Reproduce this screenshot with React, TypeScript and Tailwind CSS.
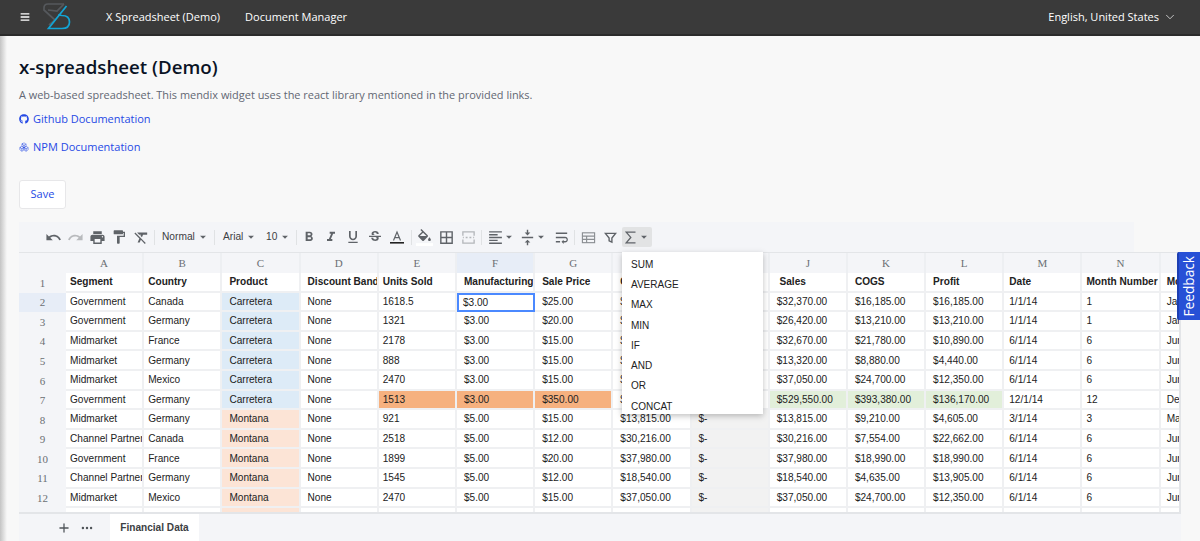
import { useState, type ReactNode } from 'react'
import { ChevronDown, Boxes, Plus, MoreHorizontal } from 'lucide-react'
import { FaBars, FaGithub } from 'react-icons/fa'
import {
  MdUndo,
  MdRedo,
  MdPrint,
  MdFormatPaint,
  MdFormatClear,
  MdFormatBold,
  MdFormatItalic,
  MdFormatUnderlined,
  MdStrikethroughS,
  MdBorderAll,
  MdFormatAlignLeft,
  MdVerticalAlignCenter,
  MdWrapText,
  MdArrowDropDown,
} from 'react-icons/md'

const openSans = "font-['Open_Sans',sans-serif]"

const columns = ['A', 'B', 'C', 'D', 'E', 'F', 'G', 'H', 'I', 'J', 'K', 'L', 'M', 'N', 'O']

// left padding per column, the sheet does not line its text up evenly
const pads = [
  'pl-[4px]',
  'pl-[4px]',
  'pl-[7px]',
  'pl-[7px]',
  'pl-[4px]',
  'pl-[7px]',
  'pl-[7px]',
  'pl-[7px]',
  'pl-[7px]',
  'pl-[7px]',
  'pl-[7px]',
  'pl-[7px]',
  'pl-[5px]',
  'pl-[4px]',
  'pl-[6px]',
]

const heading = [
  'Segment',
  'Country',
  'Product',
  'Discount Band',
  'Units Sold',
  'Manufacturing',
  'Sale Price',
  'Gross Sales',
  'Discounts',
  ' Sales',
  'COGS',
  'Profit',
  'Date',
  'Month Number',
  'Month Name',
]

const rows = [
  ['Government', 'Canada', 'Carretera', 'None', '1618.5', '$3.00', '$25.00', '$32,370.00', '$-', '$32,370.00', '$16,185.00', '$16,185.00', '1/1/14', '1', 'January'],
  ['Government', 'Germany', 'Carretera', 'None', '1321', '$3.00', '$20.00', '$26,420.00', '$-', '$26,420.00', '$13,210.00', '$13,210.00', '1/1/14', '1', 'January'],
  ['Midmarket', 'France', 'Carretera', 'None', '2178', '$3.00', '$15.00', '$32,670.00', '$-', '$32,670.00', '$21,780.00', '$10,890.00', '6/1/14', '6', 'June'],
  ['Midmarket', 'Germany', 'Carretera', 'None', '888', '$3.00', '$15.00', '$13,320.00', '$-', '$13,320.00', '$8,880.00', '$4,440.00', '6/1/14', '6', 'June'],
  ['Midmarket', 'Mexico', 'Carretera', 'None', '2470', '$3.00', '$15.00', '$37,050.00', '$-', '$37,050.00', '$24,700.00', '$12,350.00', '6/1/14', '6', 'June'],
  ['Government', 'Germany', 'Carretera', 'None', '1513', '$3.00', '$350.00', '$529,550.00', '$-', '$529,550.00', '$393,380.00', '$136,170.00', '12/1/14', '12', 'December'],
  ['Midmarket', 'Germany', 'Montana', 'None', '921', '$5.00', '$15.00', '$13,815.00', '$-', '$13,815.00', '$9,210.00', '$4,605.00', '3/1/14', '3', 'March'],
  ['Channel Partner', 'Canada', 'Montana', 'None', '2518', '$5.00', '$12.00', '$30,216.00', '$-', '$30,216.00', '$7,554.00', '$22,662.00', '6/1/14', '6', 'June'],
  ['Government', 'France', 'Montana', 'None', '1899', '$5.00', '$20.00', '$37,980.00', '$-', '$37,980.00', '$18,990.00', '$18,990.00', '6/1/14', '6', 'June'],
  ['Channel Partner', 'Germany', 'Montana', 'None', '1545', '$5.00', '$12.00', '$18,540.00', '$-', '$18,540.00', '$4,635.00', '$13,905.00', '6/1/14', '6', 'June'],
  ['Midmarket', 'Mexico', 'Montana', 'None', '2470', '$5.00', '$15.00', '$37,050.00', '$-', '$37,050.00', '$24,700.00', '$12,350.00', '6/1/14', '6', 'June'],
  ['Enterprise', 'Canada', 'Montana', 'None', '2665.5', '$5.00', '$125.00', '$333,187.50', '$-', '$333,187.50', '$319,860.00', '$13,327.50', '7/1/14', '7', 'July'],
]

const formulas = ['SUM', 'AVERAGE', 'MAX', 'MIN', 'IF', 'AND', 'OR', 'CONCAT', 'COUNT']

function Logo() {
  return (
    <svg width="28" height="28" viewBox="43 4 28 28" fill="none" strokeWidth="1.7">
      <path d="M64 5H48q-4 0-4 4v2l11 10-6 5" stroke="#55585c" />
      <path d="M64 5l-7 7-9-1" stroke="#55585c" />
      <path d="M66.5 7 48.5 29.5H62q7.5 0 7.5-6.5T62 16.5L58 16" stroke="#12a5d6" />
    </svg>
  )
}

function Separator({ space }: { space: string }) {
  return <div className={`w-px h-[15px] bg-[#e0e2e4] ${space}`} />
}

function Tool({ children, width = 'w-[22px]' }: { children: ReactNode; width?: string }) {
  return <div className={`${width} h-[20px] shrink-0 flex items-center justify-center text-[#5f6368]`}>{children}</div>
}

function Caret() {
  return <MdArrowDropDown size={14} className="text-[#5f6368] -ml-[2px]" />
}

function MergeIcon() {
  return (
    <svg width="15" height="15" viewBox="0 0 16 16" fill="none" stroke="#b3b6b9" strokeWidth="1.4">
      <path d="M2 6V2h12v4M2 10v4h12v-4M5 8h2M9 8h2M2 8h1M13 8h1" />
    </svg>
  )
}

function FreezeIcon() {
  return (
    <svg width="15" height="15" viewBox="0 0 16 16" fill="none" stroke="#8a8e92" strokeWidth="1.2">
      <rect x="1.5" y="3" width="13" height="10.5" />
      <path d="M1.5 6.5h13M1.5 10h13M6 6.5v7" />
    </svg>
  )
}

function FilterIcon() {
  return (
    <svg width="13" height="13" viewBox="0 0 14 14" fill="none" stroke="#5f6368" strokeWidth="1.5">
      <path d="M1.5 2.5h11L8.5 7.5V12L5.5 10.5v-3z" />
    </svg>
  )
}

function TextColorIcon() {
  return (
    <svg width="16" height="16" viewBox="0 0 16 16" fill="none">
      <path d="M4.5 11.5 8 3l3.5 8.5M5.6 8.6h4.8" stroke="#5f6368" strokeWidth="1.2" />
      <rect x="1" y="13" width="14" height="1.6" fill="#222" />
    </svg>
  )
}

function FillIcon() {
  return (
    <svg width="17" height="17" viewBox="0 0 24 24" fill="#5f6368">
      <path d="M16.56 8.94 7.62 0 6.21 1.41l2.38 2.38-5.15 5.15c-.59.59-.59 1.54 0 2.12l5.5 5.5c.29.29.68.44 1.06.44s.77-.15 1.06-.44l5.5-5.5c.59-.58.59-1.53 0-2.12zM5.21 10 10 5.21 14.79 10H5.21zM19 11.5s-2 2.17-2 3.5c0 1.1.9 2 2 2s2-.9 2-2c0-1.33-2-3.5-2-3.5z" />
      <rect y="20" width="24" height="4" fill="#fff" />
    </svg>
  )
}

function SigmaIcon() {
  return (
    <svg width="11" height="13" viewBox="0 0 11 13" fill="none" stroke="#5f6368" strokeWidth="1.3">
      <path d="M10.5 1.2H1.2l4.6 5.2-4.6 5.4h9.3" />
    </svg>
  )
}

function Toolbar() {
  return (
    <div className="flex items-center h-[30px] w-[1115px] pl-[23px] bg-[#f4f5f8] font-['Liberation_Sans',sans-serif] text-[10.2px] text-[#3c4043]">
      <Tool><MdUndo size={17} /></Tool>
      <Tool><MdRedo size={17} className="text-[#b8babd]" /></Tool>
      <Tool><MdPrint size={17} /></Tool>
      <Tool><MdFormatPaint size={16} /></Tool>
      <Tool><MdFormatClear size={17} /></Tool>
      <Separator space="ml-[2px] mr-[7px]" />
      <div className="flex items-center w-[50px] shrink-0">
        <span>Normal</span>
        <MdArrowDropDown size={14} className="ml-[1px] text-[#5f6368]" />
      </div>
      <Separator space="ml-[2px] mr-[8px]" />
      <div className="flex items-center w-[43px] shrink-0">
        <span>Arial</span>
        <MdArrowDropDown size={14} className="ml-[1px] text-[#5f6368]" />
      </div>
      <div className="flex items-center w-[28px] shrink-0">
        <span>10</span>
        <MdArrowDropDown size={14} className="ml-px text-[#5f6368]" />
      </div>
      <Separator space="ml-[2px] mr-[1px]" />
      <Tool><MdFormatBold size={16} /></Tool>
      <Tool><MdFormatItalic size={16} /></Tool>
      <Tool><MdFormatUnderlined size={16} /></Tool>
      <Tool><MdStrikethroughS size={16} /></Tool>
      <Tool><TextColorIcon /></Tool>
      <Separator space="ml-[3px] mr-[1px]" />
      <Tool><FillIcon /></Tool>
      <Tool><MdBorderAll size={17} /></Tool>
      <Tool><MergeIcon /></Tool>
      <Separator space="ml-[2px] mr-[3px]" />
      <Tool width="w-[32.5px]">
        <MdFormatAlignLeft size={17} />
        <Caret />
      </Tool>
      <Tool width="w-[32.5px]">
        <MdVerticalAlignCenter size={17} />
        <Caret />
      </Tool>
      <Tool><MdWrapText size={17} /></Tool>
      <Separator space="ml-[2px] mr-[2px]" />
      <Tool><FreezeIcon /></Tool>
      <Tool><FilterIcon /></Tool>
      <div className="relative ml-[1px] w-[30px] h-[20px] shrink-0 flex items-center justify-center gap-[1px] pl-[2px] bg-[#e2e3e4] rounded-[2px]">
        <SigmaIcon />
        <MdArrowDropDown size={14} className="text-[#5f6368]" />
        <div className="absolute z-20 left-0 top-[25px] w-[141px] h-[162px] overflow-hidden bg-white shadow-[0_2px_6px_rgba(0,0,0,0.25)] pt-[2px]">
          {formulas.map((f) => (
            <div key={f} className="h-[20.3px] pl-[9px] flex items-center text-[10px] text-[#222]">
              {f}
            </div>
          ))}
        </div>
      </div>
    </div>
  )
}

function cellTone(row: number, col: number) {
  if (row === 5 && col >= 4 && col <= 6) return 'bg-[#f6b17f]'
  if (row === 5 && col >= 9 && col <= 11) return 'bg-[#e2efda]'
  if (col === 2) return row < 6 ? 'bg-[#ddebf7]' : 'bg-[#fce4d6]'
  if (col === 8 && row >= 6) return 'bg-[#f2f2f2]'
  return 'bg-white'
}

function Sheet() {
  const [selected] = useState({ row: 0, col: 5 })

  return (
    <div className="w-[1162px] h-[262px] overflow-hidden border-t border-b-2 border-r-2 border-[#e3e5e8] font-['Liberation_Sans',sans-serif] text-[10.1px] text-[#222]">
      <div className="flex w-max h-[20px] bg-[#f4f5f8] font-['Liberation_Serif',serif] text-[11px] text-[#6b6f73]">
        <div className="w-[47px] shrink-0" />
        {columns.map((c) => (
          <div
            key={c}
            className={`w-[78.2px] shrink-0 flex items-center justify-center border-r-2 border-[#edeff2] ${
              c === 'F' ? 'bg-[#e7edf7]' : ''
            }`}
          >
            {c}
          </div>
        ))}
      </div>

      <div className="flex w-max h-[19.6px] bg-white">
        <div className="w-[47px] shrink-0 flex items-center justify-center bg-[#f4f5f8] font-['Liberation_Serif',serif] text-[11px] text-[#6b6f73]">
          1
        </div>
        {heading.map((h, i) => (
          <div
            key={h}
            className={`w-[78.2px] shrink-0 flex items-center whitespace-pre overflow-hidden font-bold border-r-2 border-b-2 border-[#eff0f2] ${pads[i]}`}
          >
            {h}
          </div>
        ))}
      </div>

      {rows.map((row, r) => (
        <div key={r} className="flex w-max h-[19.6px]">
          <div
            className={`w-[47px] shrink-0 flex items-center justify-center font-['Liberation_Serif',serif] text-[11px] text-[#6b6f73] ${
              r === selected.row ? 'bg-[#e7edf7]' : 'bg-[#f4f5f8]'
            }`}
          >
            {r + 2}
          </div>
          {row.map((value, c) => {
            const active = r === selected.row && c === selected.col
            return (
              <div
                key={c}
                className={`w-[78.2px] shrink-0 flex items-center whitespace-nowrap overflow-hidden ${cellTone(r, c)} ${
                  active ? 'border-2 border-[#4b89ff] pl-[4px]' : `border-r-2 border-b-2 border-[#eff0f2] ${pads[c]}`
                }`}
              >
                {value}
              </div>
            )
          })}
        </div>
      ))}
    </div>
  )
}

function SheetTabs() {
  return (
    <div className="flex items-stretch h-[27px] w-[1162px] bg-[#f4f5f8]">
      <div className="w-[91px] flex items-center pl-[38px] gap-[9px] text-[#50555a]">
        <Plus size={14} strokeWidth={2.2} />
        <MoreHorizontal size={14} strokeWidth={2.2} />
      </div>
      <div className="w-[89px] bg-white flex items-center justify-center font-['Liberation_Sans',sans-serif] text-[10.1px] font-bold text-[#3c4043]">
        Financial Data
      </div>
    </div>
  )
}

export default function App() {
  return (
    <div className={`relative h-[541px] w-[1200px] overflow-hidden flex flex-col bg-[#f8f8f8] ${openSans}`}>
      <header className="h-[36px] shrink-0 flex items-center justify-between bg-[#3a3a3a] border-b-2 border-[#2b2b2b] text-white text-[11px] pl-[20px] pr-[23px]">
        <div className="flex items-center">
          <FaBars size={10} />
          <div className="ml-[13px]">
            <Logo />
          </div>
          <span className="ml-[35px]">X Spreadsheet (Demo)</span>
          <span className="ml-[25px]">Document Manager</span>
        </div>
        <div className="flex items-center gap-[4px]">
          <span>English, United States</span>
          <ChevronDown size={14} strokeWidth={1.2} />
        </div>
      </header>

      <div className="pointer-events-none absolute left-0 top-[36px] bottom-0 w-[7px] bg-gradient-to-r from-[#c4c4c4] to-transparent" />

      <main className="flex flex-col items-start pl-[19px]">
        <h1 className="mt-[17px] text-[18.7px] leading-[27px] font-semibold text-[#0a1325]">x-spreadsheet (Demo)</h1>
        <p className="mt-[7px] text-[10.95px] leading-[16px] text-[#626773]">
          A web-based spreadsheet. This mendix widget uses the react library mentioned in the provided links.
        </p>
        <a className="mt-[8px] flex items-center gap-[4px] text-[11px] leading-[16px] text-[#264ae5]">
          <FaGithub size={10} />
          Github Documentation
        </a>
        <a className="mt-[12px] flex items-center gap-[4px] text-[11px] leading-[16px] text-[#264ae5]">
          <Boxes size={10} strokeWidth={1.2} />
          NPM Documentation
        </a>
        <button className="mt-[25px] w-[47px] h-[29px] bg-white border border-[#e7e7e9] rounded-[3px] text-[11px] text-[#264ae5]">
          Save
        </button>
        <div className="mt-[13px]">
          <Toolbar />
          <Sheet />
          <SheetTabs />
        </div>
      </main>

      <div className="absolute z-30 right-0 top-[252px] w-[23px] h-[68px] flex items-center justify-center bg-[#2750d6] border-l-2 border-[#1d3fb3] rounded-l-[2px] text-white text-[13.7px]">
        <span className="[writing-mode:vertical-rl] rotate-180">Feedback</span>
      </div>
    </div>
  )
}
